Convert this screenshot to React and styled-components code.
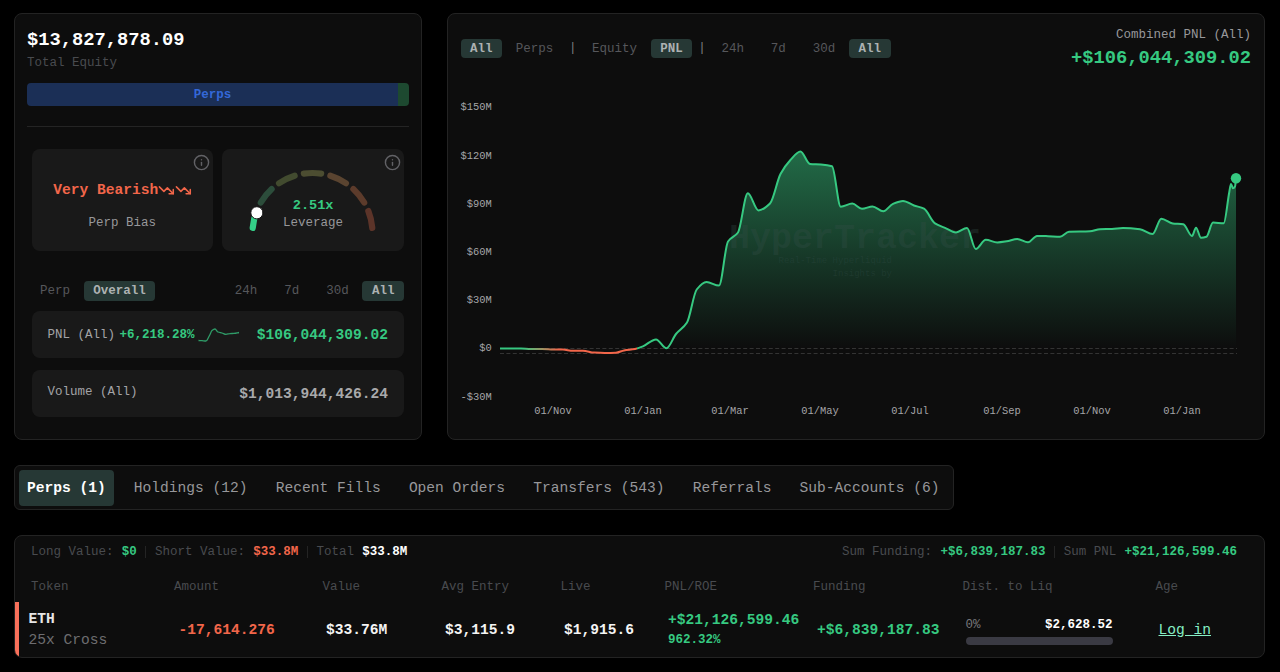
import React from 'react';
import styled, { createGlobalStyle } from 'styled-components';
import { Info, TrendingDown } from 'lucide-react';

const GREEN = '#36c981';
const RED = '#f2664a';

const pnlPoints = [
    [500, 348.4], [510, 348.4], [521, 348.5], [531, 349], [542, 348.9], [553, 349.4],
    [563, 349.6], [573, 350.8], [583, 350.7], [594, 352.6], [605, 353], [616, 352.8],
    [624, 350.4], [635, 349], [643, 346.3], [656, 339.4], [666.5, 348.3], [676, 334],
    [687, 322.5], [696.7, 289.5], [706.5, 282], [719, 285.6], [728, 241.5], [738, 232.5],
    [747.8, 193.3], [758.5, 210.4], [770, 203.5], [780.5, 174], [790, 160.5], [800.5, 151.5],
    [810, 164], [821, 164.5], [832, 166.2], [840.7, 206.7], [852.3, 203.6], [862, 208.8],
    [872.5, 206.5], [883.3, 211.3], [893, 203.8], [903, 200.9], [914, 205.5], [924, 208.7],
    [935, 223.4], [945, 227.8], [956, 232.4], [967, 228], [975.8, 249], [985.8, 239.8],
    [997.3, 242.4], [1006.7, 241.3], [1017.3, 239], [1028, 242.3], [1037, 235.9], [1048, 236.2],
    [1060, 236.8], [1069, 231.8], [1090, 231.3], [1100, 229.2], [1112, 229], [1123, 228.1],
    [1140, 229.2], [1152.6, 234], [1161.3, 218.7], [1172.7, 223.4], [1183.3, 224.3],
    [1192, 236], [1196, 227.7], [1201, 237.8], [1206.5, 236.7], [1213, 222.6], [1223.7, 223.3],
    [1229.3, 192], [1231, 184], [1233, 188.3], [1235, 186.5], [1236, 178],
];

const sparkPoints = [
    [1.5, 14.5], [5, 14.7], [9, 15], [12.5, 9.5], [15, 4.5], [18, 3], [21, 6], [25, 7],
    [29, 8.4], [33, 7.6], [37, 7.4], [42, 6.5],
];

const yTicks = [
    ['$150M', 107], ['$120M', 155.3], ['$90M', 203.5], ['$60M', 251.7],
    ['$30M', 300], ['$0', 348], ['-$30M', 396.3],
];

const xTicks = [
    ['01/Nov', 553], ['01/Jan', 643], ['01/Mar', 730], ['01/May', 820],
    ['01/Jul', 910], ['01/Sep', 1002], ['01/Nov', 1092], ['01/Jan', 1182],
];

const gaugeColors = ['#34cf88', '#2c4d3b', '#424b2f', '#4c4d31', '#5a4430', '#5c3b2b', '#5c3429'];

const tabs = [
    'Holdings (12)', 'Recent Fills', 'Open Orders', 'Transfers (543)', 'Referrals', 'Sub-Accounts (6)',
];

const columns = ['Token', 'Amount', 'Value', 'Avg Entry', 'Live', 'PNL/ROE', 'Funding', 'Dist. to Liq', 'Age'];

// monotone cubic through the points
const smooth = (pts) => {
    const slope = pts.slice(1).map((p, i) => (p[1] - pts[i][1]) / (p[0] - pts[i][0]));
    const tan = pts.map((p, i) => {
        if (i === 0) return slope[0];
        if (i === pts.length - 1) return slope[i - 1];
        const a = slope[i - 1];
        const b = slope[i];
        return a * b <= 0 ? 0 : (2 * a * b) / (a + b);
    });
    return pts.slice(1).reduce((d, p, i) => {
        const [x, y] = pts[i];
        const h = (p[0] - x) / 3;
        const c1 = `${(x + h).toFixed(2)},${(y + tan[i] * h).toFixed(2)}`;
        const c2 = `${(p[0] - h).toFixed(2)},${(p[1] - tan[i + 1] * h).toFixed(2)}`;
        return `${d}C${c1} ${c2} ${p[0]},${p[1]}`;
    }, `M${pts[0][0]},${pts[0][1]}`);
};

const gaugeArc = (index) => {
    const r = 60;
    const at = (deg) => {
        const t = (deg * Math.PI) / 180;
        return `${(65.5 - r * Math.cos(t)).toFixed(2)} ${(66 - r * Math.sin(t)).toFixed(2)}`;
    };
    const start = 4.9 + index * 25.6;
    return `M${at(start)}A${r} ${r} 0 0 1 ${at(start + 16.6)}`;
};

const PnlChart = () => {
    const line = smooth(pnlPoints);

    return(
        <Chart viewBox="448 90 816 335">
            <defs>
                <linearGradient id="area" gradientUnits="userSpaceOnUse" x1="0" y1="151" x2="0" y2="348">
                    <stop offset="0" stopColor={GREEN} stopOpacity="0.5" />
                    <stop offset="1" stopColor={GREEN} stopOpacity="0" />
                </linearGradient>
                <linearGradient id="line" gradientUnits="userSpaceOnUse" x1="500" y1="0" x2="1236" y2="0">
                    <stop offset="0" stopColor={GREEN} />
                    <stop offset="0.03" stopColor={GREEN} />
                    <stop offset="0.08" stopColor={RED} />
                    <stop offset="0.186" stopColor={RED} />
                    <stop offset="0.186" stopColor={GREEN} />
                </linearGradient>
            </defs>
            <ZeroLine d="M500 348.5H1237M500 353.5H1237" />
            <path d={`${line}L1236,348L500,348Z`} fill="url(#area)" />
            <Watermark>
                <text x="729" y="247.5" fontSize="35" fontWeight="bold">HyperTracker</text>
                <text x="892" y="263" fontSize="9" textAnchor="end">Real-Time Hyperliquid</text>
                <text x="892" y="276" fontSize="9" textAnchor="end">Insights by</text>
            </Watermark>
            <path d={line} fill="none" stroke="url(#line)" strokeWidth="2" strokeLinejoin="round" />
            <circle cx="1236" cy="178.3" r="5.2" fill={GREEN} />
            {yTicks.map(([label, y]) => (
                <Tick key={label} x="491.7" y={y + 3.3} textAnchor="end">{label}</Tick>
            ))}
            {xTicks.map(([label, x]) => (
                <Tick key={x} x={x} y="413.5" textAnchor="middle">{label}</Tick>
            ))}
        </Chart>
    );
};

const EquityCard = () => {

    return(
        <LeftCard>
            <Equity>$13,827,878.09</Equity>
            <EquityLabel>Total Equity</EquityLabel>
            <SplitBar>
                <PerpsShare>Perps</PerpsShare>
                <SpotShare />
            </SplitBar>
            <Divider />
            <StatGrid>
                <StatBox>
                    <InfoIcon />
                    <Bias>
                        Very Bearish
                        <TrendingDown size={16.67} strokeWidth={2.2} />
                        <TrendingDown size={16.67} strokeWidth={2.2} />
                    </Bias>
                    <StatLabel>Perp Bias</StatLabel>
                </StatBox>
                <StatBox>
                    <InfoIcon />
                    <Gauge viewBox="0 0 131 72">
                        {gaugeColors.map((color, i) => (
                            <path key={color} d={gaugeArc(i)} stroke={color} />
                        ))}
                        <circle cx="9.9" cy="45.8" r="6.1" fill="#fff" stroke="#151515" strokeWidth="1" />
                    </Gauge>
                    <Leverage>2.51x</Leverage>
                    <LeverageLabel>Leverage</LeverageLabel>
                </StatBox>
            </StatGrid>
            <FilterRow>
                <Chip $narrow>Perp</Chip>
                <Chip $active>Overall</Chip>
                <Spacer />
                <Chip>24h</Chip>
                <Chip>7d</Chip>
                <Chip>30d</Chip>
                <Chip $active>All</Chip>
            </FilterRow>
            <MetricRow>
                <MetricLabel>PNL (All)</MetricLabel>
                <Percent>+6,218.28%</Percent>
                <Spark viewBox="0 0 43 18">
                    <path d={smooth(sparkPoints)} />
                </Spark>
                <MetricValue $color={GREEN}>$106,044,309.02</MetricValue>
            </MetricRow>
            <MetricRow>
                <MetricLabel $raised>Volume (All)</MetricLabel>
                <MetricValue $color="#a9a9ab">$1,013,944,426.24</MetricValue>
            </MetricRow>
        </LeftCard>
    );
};

const ChartCard = () => {

    return(
        <RightCard>
            <ChartHeader>
                <ChartFilters>
                    <Chip $active>All</Chip>
                    <Chip>Perps</Chip>
                    <Bar>|</Bar>
                    <Chip>Equity</Chip>
                    <Chip $active>PNL</Chip>
                    <Bar>|</Bar>
                    <Chip>24h</Chip>
                    <Chip>7d</Chip>
                    <Chip>30d</Chip>
                    <Chip $active>All</Chip>
                </ChartFilters>
                <Combined>
                    <CombinedLabel>Combined PNL (All)</CombinedLabel>
                    <CombinedValue>+$106,044,309.02</CombinedValue>
                </Combined>
            </ChartHeader>
            <PnlChart />
        </RightCard>
    );
};

const Positions = () => {

    return(
        <TableCard>
            <Summary>
                <span>Long Value: <Strong $color={GREEN}>$0</Strong></span>
                <Pipe />
                <span>Short Value: <Strong $color={RED}>$33.8M</Strong></span>
                <Pipe />
                <span>Total <Strong $color="#fff">$33.8M</Strong></span>
                <Spacer />
                <span>Sum Funding: <Strong $color={GREEN}>+$6,839,187.83</Strong></span>
                <Pipe />
                <span>Sum PNL <Strong $color={GREEN}>+$21,126,599.46</Strong></span>
            </Summary>
            <HeadRow>
                {columns.map((name) => <span key={name}>{name}</span>)}
            </HeadRow>
            <PositionRow>
                <Token>
                    <span>ETH</span>
                    <Leverage25>25x Cross</Leverage25>
                </Token>
                <Cell $color={RED}>-17,614.276</Cell>
                <Cell>$33.76M</Cell>
                <Cell>$3,115.9</Cell>
                <Cell>$1,915.6</Cell>
                <Cell $color={GREEN}>
                    +$21,126,599.46
                    <Roe>962.32%</Roe>
                </Cell>
                <Cell $color={GREEN}>+$6,839,187.83</Cell>
                <Liq>
                    <LiqText>
                        <LiqPercent>0%</LiqPercent>
                        <span>$2,628.52</span>
                    </LiqText>
                    <LiqTrack />
                </Liq>
                <Login href="#">Log in</Login>
            </PositionRow>
        </TableCard>
    );
};

const App = () => {

    return(
        <>
            <GlobalStyle />
            <Page>
                <TopRow>
                    <EquityCard />
                    <ChartCard />
                </TopRow>
                <Tabs>
                    <Tab $active>Perps (1)</Tab>
                    {tabs.map((tab) => <Tab key={tab}>{tab}</Tab>)}
                </Tabs>
                <Positions />
            </Page>
        </>
    );
};

const GlobalStyle = createGlobalStyle`
    * {
        box-sizing: border-box;
    }

    body {
        margin: 0;
        background: #000000;
        color: #ffffff;
        font-family: "Liberation Mono", monospace;
        font-size: 12.5px;
        overflow: hidden;
    }
`;

const Page = styled.div`
    width: 1280px;
    height: 672px;
    padding: 13px 15px 0 14px;
`;

const TopRow = styled.div`
    display: flex;
    gap: 25px;
`;

const Card = styled.div`
    background: #0d0d0d;
    border: 1px solid #232323;
    border-radius: 8px;
`;

const LeftCard = styled(Card)`
    width: 408px;
    height: 427px;
    padding: 14px 12px 0;
`;

const RightCard = styled(Card)`
    width: 818px;
    height: 427px;
`;

const Equity = styled.div`
    height: 25px;
    line-height: 25px;
    font-size: 18.75px;
    font-weight: bold;
`;

const EquityLabel = styled.div`
    height: 18px;
    line-height: 21px;
    color: #494b4f;
`;

const SplitBar = styled.div`
    display: flex;
    height: 23px;
    margin-top: 12px;
    border-radius: 4px;
    overflow: hidden;
`;

const PerpsShare = styled.div`
    flex: 1;
    line-height: 24px;
    text-align: center;
    font-weight: bold;
    color: #3468d8;
    background: #1b2f56;
`;

const SpotShare = styled.div`
    width: 11px;
    background: #1d4930;
`;

const Divider = styled.div`
    height: 1px;
    margin: 20px 0 22px;
    background: #242424;
`;

const StatGrid = styled.div`
    display: grid;
    grid-template-columns: 1fr 1fr;
    gap: 9px;
    padding: 0 5px 0 4.5px;
`;

const StatBox = styled.div`
    position: relative;
    display: flex;
    flex-direction: column;
    align-items: center;
    height: 102px;
    border-radius: 8px;
    background: #191919;
`;

const InfoIcon = styled(Info).attrs({ size: 17, strokeWidth: 2 })`
    position: absolute;
    top: 4.5px;
    right: 3.5px;
    color: #626266;
`;

const Bias = styled.div`
    display: flex;
    align-items: center;
    height: 22px;
    margin-top: 30px;
    font-size: 14.58px;
    font-weight: bold;
    color: ${RED};
`;

const StatLabel = styled.div`
    height: 18px;
    line-height: 18px;
    margin-top: 13px;
    color: #97979a;
`;

const Gauge = styled.svg`
    position: absolute;
    top: 17.5px;
    left: 25px;
    width: 131px;
    height: 72px;
    fill: none;
    stroke-width: 6.2;
    stroke-linecap: round;
`;

const Leverage = styled.div`
    height: 18px;
    line-height: 18px;
    margin-top: 48px;
    font-size: 13.54px;
    font-weight: bold;
    color: ${GREEN};
`;

const LeverageLabel = styled(StatLabel)`
    margin-top: -1px;
`;

const FilterRow = styled.div`
    display: flex;
    align-items: center;
    gap: 4px;
    height: 20px;
    margin: 30px 5px 0 3.5px;
`;

const Chip = styled.div`
    min-width: ${props => props.$narrow ? '0' : '41.7px'};
    height: 19.5px;
    padding: 0 9.6px;
    line-height: 21px;
    text-align: center;
    border-radius: 4px;
    font-weight: ${props => props.$active ? 'bold' : 'normal'};
    color: ${props => props.$active ? '#adb2b2' : '#56575b'};
    background: ${props => props.$active ? '#263835' : 'transparent'};
`;

const Spacer = styled.div`
    flex: 1;
`;

const MetricRow = styled.div`
    display: flex;
    align-items: center;
    height: 47px;
    margin: 10px 5px 12px 4.5px;
    padding: 0 16px;
    border-radius: 8px;
    background: #191919;
`;

const MetricLabel = styled.div`
    margin-bottom: ${props => props.$raised ? '3px' : '0'};
    color: #a3a3a6;
`;

const Percent = styled.div`
    margin: 0 2.5px 0 4.5px;
    color: ${GREEN};
    font-weight: bold;
`;

const Spark = styled.svg`
    width: 43px;
    height: 18px;
    fill: none;
    stroke: #2f9c68;
    stroke-width: 1.3;
`;

const MetricValue = styled.div`
    margin-left: auto;
    font-size: 14.58px;
    font-weight: bold;
    color: ${props => props.$color};
`;

const ChartHeader = styled.div`
    display: flex;
    justify-content: space-between;
    height: 76px;
    padding: 12px 13px 0 12.5px;
`;

const ChartFilters = styled.div`
    display: flex;
    align-items: center;
    gap: 4px;
    height: 20px;
    margin-top: 12.5px;
`;

const Bar = styled.div`
    width: 11.5px;
    line-height: 21px;
    text-align: center;
    color: #7b7b7e;
`;

const Combined = styled.div`
    text-align: right;
`;

const CombinedLabel = styled.div`
    height: 18px;
    line-height: 18px;
    color: #97979a;
`;

const CombinedValue = styled.div`
    height: 28px;
    line-height: 28px;
    font-size: 18.75px;
    font-weight: bold;
    color: ${GREEN};
`;

const Chart = styled.svg`
    display: block;
    width: 816px;
    height: 335px;
`;

const ZeroLine = styled.path`
    stroke: #333333;
    stroke-width: 1;
    stroke-dasharray: 4 2.4;
`;

const Watermark = styled.g`
    fill: rgba(52, 78, 72, 0.32);
`;

const Tick = styled.text`
    font-size: 10.42px;
    fill: #a5a5a8;
`;

const Tabs = styled.div`
    display: flex;
    align-items: center;
    width: 940px;
    height: 45px;
    margin-top: 25px;
    padding: 0 3.5px;
    border: 1px solid #232323;
    border-radius: 6px;
    background: #0d0d0d;
`;

const Tab = styled.div`
    height: 36px;
    margin-right: 11.4px;
    padding: 0 8.4px;
    line-height: 37px;
    white-space: nowrap;
    border-radius: 4px;
    font-size: 14.58px;
    font-weight: ${props => props.$active ? 'bold' : 'normal'};
    color: ${props => props.$active ? '#ffffff' : '#97979a'};
    background: ${props => props.$active ? '#263835' : 'transparent'};
`;

const TableCard = styled(Card)`
    height: 123px;
    margin-top: 25px;
    overflow: hidden;
`;

const Summary = styled.div`
    display: flex;
    align-items: center;
    height: 32px;
    padding: 0 27px 0 16px;
    color: #494b4f;
`;

const Strong = styled.span`
    margin-left: 0.8px;
    font-weight: bold;
    color: ${props => props.$color};
`;

const Pipe = styled.div`
    width: 1px;
    height: 12px;
    margin: 0 8.6px;
    background: #242424;
`;

const HeadRow = styled.div`
    display: grid;
    grid-template-columns: 143px 148.5px 119px 119px 104px 148.5px 149.5px 193px 1fr;
    align-items: center;
    height: 34px;
    padding: 3px 0 0 16px;
    color: #494b4f;
`;

const PositionRow = styled.div`
    display: grid;
    grid-template-columns: 150px 147.5px 119px 119px 104px 149px 148.5px 193px 1fr;
    align-items: center;
    height: 55px;
    padding-left: 9.5px;
    border-left: 4px solid #f8705a;
    font-size: 14.58px;
`;

const Token = styled.div`
    display: flex;
    flex-direction: column;
    line-height: 21px;
    font-weight: bold;
    color: #e6e6e6;
`;

const Leverage25 = styled.span`
    font-weight: normal;
    color: #6d6d70;
`;

const Cell = styled.div`
    font-weight: bold;
    color: ${props => props.$color || '#f4f4f4'};
`;

const Roe = styled.div`
    margin-top: 5px;
    font-size: 12.5px;
`;

const Liq = styled.div`
    width: 147px;
    padding-top: 3px;
    font-size: 12.5px;
`;

const LiqText = styled.div`
    display: flex;
    justify-content: space-between;
    height: 19px;
    font-weight: bold;
`;

const LiqPercent = styled.span`
    font-weight: normal;
    color: #77777b;
`;

const LiqTrack = styled.div`
    height: 8px;
    border-radius: 4px;
    background: #3a3a43;
`;

const Login = styled.a`
    color: #86efc5;
    text-decoration: underline;
`;

export default App;
